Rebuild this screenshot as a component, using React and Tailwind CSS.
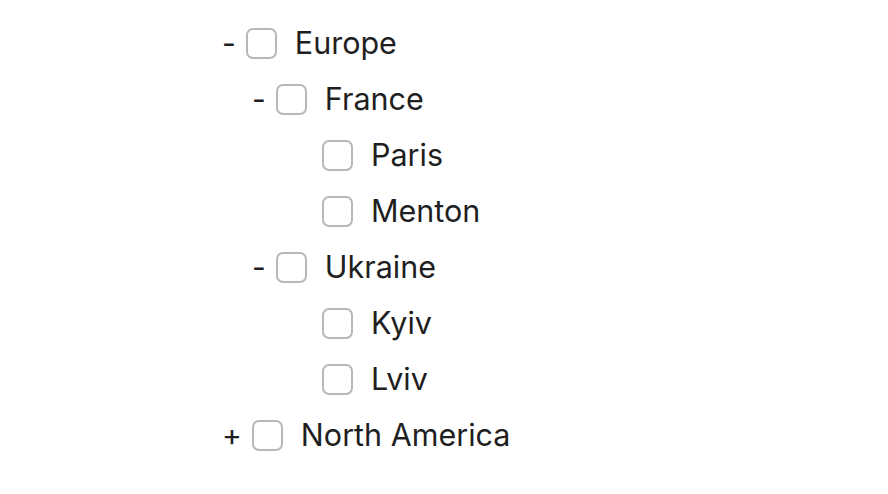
const tree = [
  {
    name: 'Europe',
    open: true,
    children: [
      { name: 'France', open: true, children: [{ name: 'Paris' }, { name: 'Menton' }] },
      { name: 'Ukraine', open: true, children: [{ name: 'Kyiv' }, { name: 'Lviv' }] },
    ],
  },
  { name: 'North America', open: false, children: [{ name: 'USA' }] },
];

function Node({ node }) {
  const hasChildren = !!node.children;
  return (
    <li>
      <div className="flex items-center h-[56px]">
        {hasChildren ? (
          <span className="mr-[10px] text-[30px] leading-none text-[#1f1f1f]">{node.open ? '-' : '+'}</span>
        ) : (
          <span className="w-[40px]" />
        )}
        <span className="w-[31px] h-[31px] rounded-[7px] border-2 border-[#b8b8bc] bg-white" />
        <span className="ml-[18px] text-[30.5px] leading-none text-[#1f1f1f]">{node.name}</span>
      </div>
      {hasChildren && node.open && (
        <ul className="pl-[30px]">
          {node.children.map(c => (
            <Node key={c.name} node={c} />
          ))}
        </ul>
      )}
    </li>
  );
}

export default function App() {
  return (
    <div className="min-h-[494px] bg-white pt-[15px] pl-[222px]" style={{ fontFamily: 'Inter, "Noto Sans", sans-serif' }}>
      <ul>
        {tree.map(n => (
          <Node key={n.name} node={n} />
        ))}
      </ul>
    </div>
  );
}
